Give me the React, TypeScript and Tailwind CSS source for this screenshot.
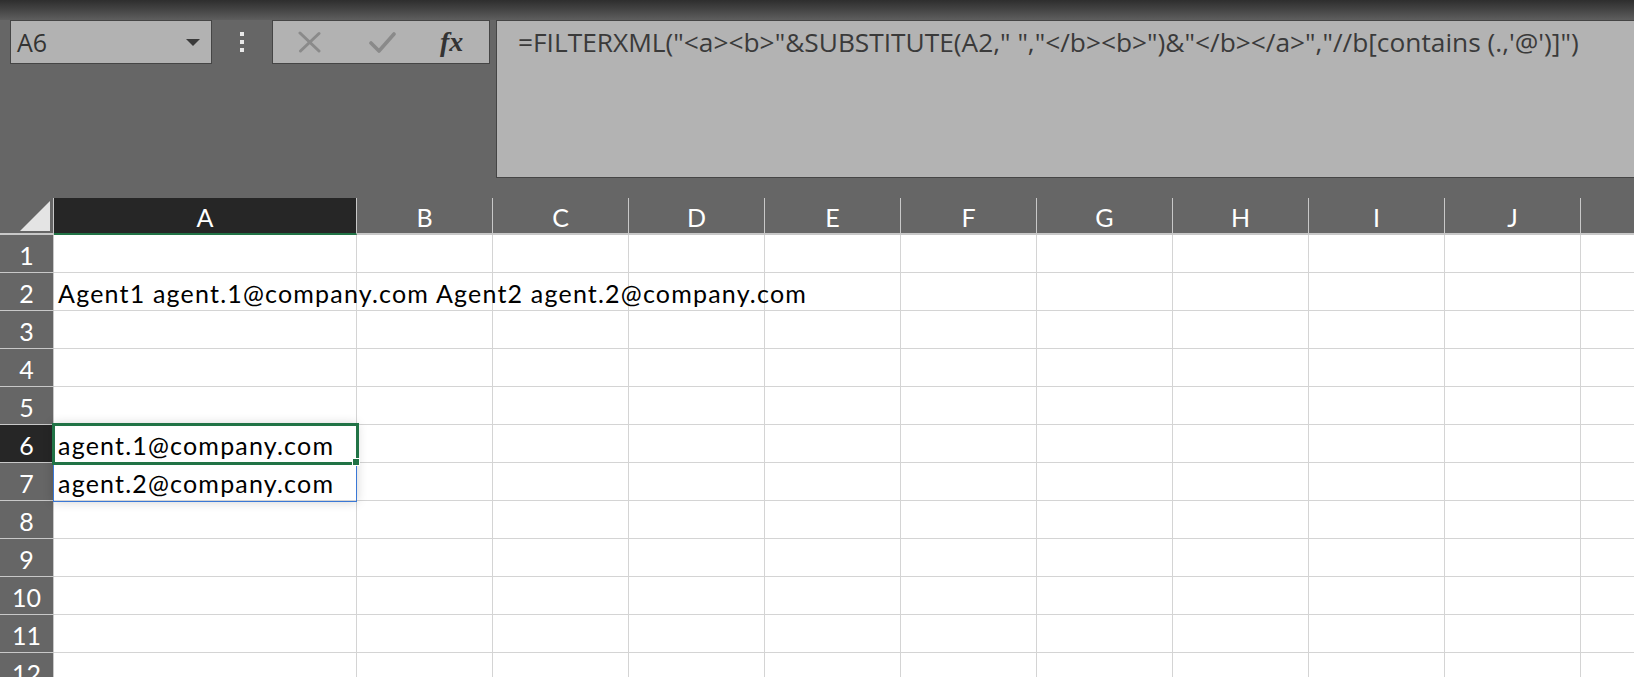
import React from 'react';

const cols = ['B', 'C', 'D', 'E', 'F', 'G', 'H', 'I', 'J', ''];
const rows = [1, 2, 3, 4, 5, 6, 7, 8, 9, 10, 11, 12];

const cellFont = { fontFamily: 'Lato, "Noto Sans", sans-serif' };

function ToolbarIcons() {
  return (
    <div className="flex h-[44px] w-[218px] shrink-0 items-center border border-[#454545] bg-[#b2b2b2]">
      <svg className="ml-[25px] h-[22px] w-[24px]" viewBox="0 0 24 22">
        <path d="M2 2 L21 20 M21 2.5 L2.5 20" stroke="#8a8a8a" strokeWidth="3" strokeLinecap="round" />
      </svg>
      <svg className="ml-[47px] h-[22px] w-[27px]" viewBox="0 0 27 22">
        <path d="M2 12 L10 20 L25 3" stroke="#8a8a8a" strokeWidth="3.6" fill="none" strokeLinecap="round" strokeLinejoin="round" />
      </svg>
      <span
        className="ml-[44px] text-[28px] font-bold italic leading-none text-[#333]"
        style={{ fontFamily: '"Liberation Serif", serif' }}
      >
        fx
      </span>
    </div>
  );
}

export default function App() {
  return (
    <div className="relative h-[677px] w-[1634px] overflow-hidden bg-[#666666]">
      <div className="h-5 bg-gradient-to-b from-[#2e2e2e] to-[#5e5e5e]" />

      {/* name box + formula bar */}
      <div className="flex h-[178px] items-start pl-[10px]">
        <div
          className="flex h-[44px] w-[202px] shrink-0 items-center justify-between border border-[#454545] bg-[#b2b2b2] pl-[6px] pr-[11px] text-[25px] text-[#333]"
          style={{ fontFamily: '"Open Sans", "Noto Sans", sans-serif' }}
        >
          <span className="leading-none">A6</span>
          <svg className="h-[7px] w-[14px]" viewBox="0 0 14 7">
            <path d="M0 0 H14 L7 7 Z" fill="#3a3a3a" />
          </svg>
        </div>
        <div className="flex h-[44px] w-[60px] shrink-0 flex-col items-center justify-center gap-[4px]">
          <div className="h-[4px] w-[4px] bg-[#e8e8e8]" />
          <div className="h-[4px] w-[4px] bg-[#e8e8e8]" />
          <div className="h-[4px] w-[4px] bg-[#e8e8e8]" />
        </div>
        <ToolbarIcons />
        <div
          className="ml-[6px] h-[158px] flex-1 whitespace-nowrap border-y border-l border-[#454545] bg-[#b3b3b3] pl-[21px] pt-[4px] text-[26.3px] leading-[34px] text-[#3a3a3a]"
          style={{ fontFamily: '"Open Sans", "Noto Sans", sans-serif' }}
        >
          =FILTERXML("&lt;a&gt;&lt;b&gt;"&amp;SUBSTITUTE(A2," ","&lt;/b&gt;&lt;b&gt;")&amp;"&lt;/b&gt;&lt;/a&gt;","//b[contains (.,'@')]")
        </div>
      </div>

      {/* sheet */}
      <div className="relative" style={cellFont}>
        <div className="flex h-[37px]">
          <div className="flex h-full w-[54px] shrink-0 items-end justify-end border-r border-b-2 border-[#c8c8c8] bg-[#666666] pb-[2px] pr-[3px]">
            <svg className="h-[30px] w-[30px]" viewBox="0 0 30 30">
              <path d="M30 0 V30 H0 Z" fill="#e4e4e4" />
            </svg>
          </div>
          <div className="flex h-full w-[303px] shrink-0 items-end justify-center border-b-2 border-r border-b-[#217346] border-r-[#c8c8c8] bg-[#262626] pb-[3px] text-[25px] leading-none text-white">
            A
          </div>
          {cols.map((c, i) => (
            <div
              key={i}
              className="flex h-full w-[136px] shrink-0 items-end justify-center border-b-2 border-r border-[#c8c8c8] bg-[#666666] pb-[3px] text-[25px] leading-none text-white"
            >
              {c}
            </div>
          ))}
        </div>

        {rows.map((r) => (
          <div key={r} className="flex h-[38px]">
            <div
              className={`flex w-[54px] shrink-0 items-end justify-center border-r border-b border-[#c8c8c8] pb-[4px] text-[25px] leading-none text-white ${
                r === 6 ? 'bg-[#262626]' : 'bg-[#666666]'
              }`}
            >
              {r}
            </div>
            <div className="relative flex w-[303px] shrink-0 items-end border-r border-b border-[#d4d4d4] bg-white pb-[4px] pl-[4px] text-[25px] leading-none tracking-[1.2px] text-black">
              {r === 2 && (
                <span className="whitespace-nowrap">Agent1 agent.1@company.com Agent2 agent.2@company.com</span>
              )}
              {r === 6 && <span>agent.1@company.com</span>}
              {r === 7 && <span>agent.2@company.com</span>}
            </div>
            {cols.map((c, i) => (
              <div key={i} className="w-[136px] shrink-0 border-r border-b border-[#d4d4d4] bg-white" />
            ))}
          </div>
        ))}

        {/* spill range A6:A7 */}
        <div className="pointer-events-none absolute left-[53px] top-[226px] h-[78px] w-[304px] border border-[#3a78d6] shadow-[0_0_10px_rgba(0,0,0,0.18)]" />
        {/* active cell A6 */}
        <div className="pointer-events-none absolute left-[52px] top-[225px] h-[42px] w-[307px] border-[3px] border-[#217346]" />
        <div className="pointer-events-none absolute left-[352px] top-[260px] h-[8px] w-[8px] border border-white bg-[#217346]" />
      </div>
    </div>
  );
}
